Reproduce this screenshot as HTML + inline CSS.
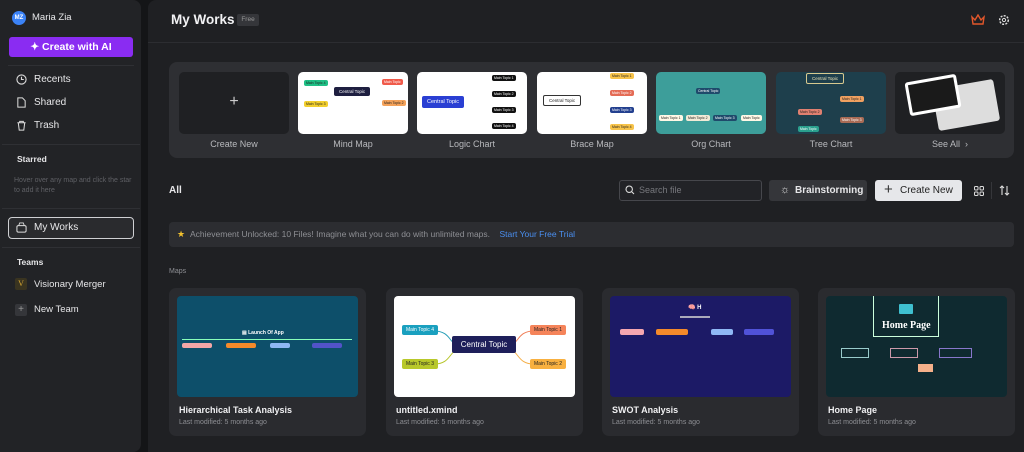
<!DOCTYPE html>
<html><head><meta charset="utf-8"><style>
*{box-sizing:border-box;margin:0;padding:0}
body{width:1024px;height:452px;overflow:hidden;background:#141517;font-family:"Liberation Sans",sans-serif;color:#e6e6e8;position:relative}
.abs{position:absolute;white-space:nowrap}
#side{left:0;top:0;width:141px;height:452px;background:#222326;border-radius:0 8px 8px 0}
#main{left:148px;top:0;width:876px;height:452px;background:#1f2023;border-radius:8px 0 0 0}
.hr{position:absolute;height:1px;background:#2f3034}
.nav{position:absolute;left:16px;font-size:10px;color:#e8e8ea;display:flex;align-items:center;gap:7px;white-space:nowrap}
.tcard{position:absolute;top:72px;width:110px;height:62px;border-radius:5px;overflow:hidden}
.tlabel{position:absolute;top:139px;width:110px;text-align:center;font-size:9px;color:#b8b9bd}
.mcard{position:absolute;top:288px;width:197px;height:148px;background:#2a2b2f;border-radius:7px}
.thumb{position:absolute;left:8px;top:8px;width:181px;height:101px;border-radius:4px;overflow:hidden}
.mt{position:absolute;left:10px;top:117px;font-size:9px;font-weight:bold;color:#f0f0f2}
.ms{position:absolute;left:10px;top:131px;font-size:7px;color:#8d8e93}
.pill{position:absolute;font-size:3.5px;padding:1px 2px;border-radius:2px;color:#222;white-space:nowrap}
</style></head><body>
<div id="side" class="abs">
  <div class="abs" style="left:12px;top:11px;width:14px;height:14px;border-radius:50%;background:#3b82f6;font-size:6px;color:#fff;text-align:center;line-height:14px;font-weight:bold">MZ</div>
  <div class="abs" style="left:32px;top:12px;font-size:9.5px;color:#e8e8ea">Maria Zia</div>
  <div class="abs" style="left:9px;top:37px;width:124px;height:20px;background:#8a2cf2;border-radius:3px;color:#fff;font-size:10.5px;font-weight:bold;text-align:center;line-height:20px">✦ Create with AI</div>
  <div class="hr" style="left:8px;top:65px;width:126px"></div>
  <div class="nav" style="top:74px"><svg width="11" height="11" viewBox="0 0 12 12"><circle cx="6" cy="6" r="5" fill="none" stroke="#ddd" stroke-width="1.2"/><path d="M6 3v3h2.5" stroke="#ddd" fill="none" stroke-width="1.2"/></svg>Recents</div>
  <div class="nav" style="top:97px"><svg width="11" height="11" viewBox="0 0 12 12"><path d="M2 1h5l3 3v7H2z" fill="none" stroke="#ddd" stroke-width="1.1"/></svg>Shared</div>
  <div class="nav" style="top:120px"><svg width="11" height="11" viewBox="0 0 12 12"><path d="M1.5 3h9M4 3V1.5h4V3M2.5 3l1 8h5l1-8" fill="none" stroke="#ddd" stroke-width="1.1"/></svg>Trash</div>
  <div class="hr" style="left:2px;top:144px;width:138px"></div>
  <div class="abs" style="left:17px;top:154px;font-size:8.5px;font-weight:bold">Starred</div>
  <div class="abs" style="left:14px;top:176px;font-size:7px;color:#5f6065;line-height:9.5px;width:125px;white-space:normal">Hover over any map and click the star to add it here</div>
  <div class="hr" style="left:2px;top:208px;width:138px"></div>
  <div class="abs" style="left:8px;top:217px;width:126px;height:22px;border:1.3px solid #cfd0d3;border-radius:4px;background:#2a2b2e"></div>
  <div class="nav" style="top:222px"><svg width="11" height="11" viewBox="0 0 12 12"><rect x="1" y="4" width="10" height="7" rx="1.5" fill="none" stroke="#ddd" stroke-width="1.1"/><path d="M3 4l1-3h4l1 3" fill="none" stroke="#ddd"/></svg>My Works</div>
  <div class="hr" style="left:2px;top:247px;width:138px"></div>
  <div class="abs" style="left:17px;top:257px;font-size:8.5px;font-weight:bold">Teams</div>
  <div class="abs" style="left:15px;top:278px;width:12px;height:12px;background:#3a3420;color:#d6a531;font-size:8px;text-align:center;line-height:12px;font-family:'Liberation Serif',serif;border-radius:2px">V</div>
  <div class="abs" style="left:34px;top:279px;font-size:9.5px">Visionary Merger</div>
  <div class="abs" style="left:15px;top:304px;width:12px;height:12px;background:#35363a;color:#999;font-size:10px;text-align:center;line-height:12px;border-radius:2px">+</div>
  <div class="abs" style="left:34px;top:304px;font-size:9.5px">New Team</div>
</div>
<div id="main" class="abs"></div>
<div class="abs" style="left:171px;top:12px;font-size:13.5px;font-weight:bold;color:#f2f2f4">My Works</div>
<div class="abs" style="left:237px;top:14px;width:22px;height:12px;background:#35363a;border-radius:2px;font-size:6.5px;color:#999;text-align:center;line-height:12px">Free</div>
<svg class="abs" style="left:971px;top:14px" width="14" height="12" viewBox="0 0 14 12"><path d="M1 3l3 3 3-5 3 5 3-3-1 7H2z" fill="none" stroke="#e2572b" stroke-width="1.4"/></svg>
<svg class="abs" style="left:998px;top:14px" width="12" height="12" viewBox="0 0 12 12"><circle cx="6" cy="6" r="4.3" fill="none" stroke="#ddd" stroke-width="1.5" stroke-dasharray="2 1.3"/><circle cx="6" cy="6" r="1.6" fill="none" stroke="#ddd"/></svg>
<div class="hr" style="left:148px;top:42px;width:876px;background:#2c2d31"></div>

<div class="abs" style="left:169px;top:62px;width:845px;height:96px;background:#2e2f33;border-radius:8px"></div>
<div class="tcard" style="left:179px;background:#1f2023;color:#ccc;font-size:16px;text-align:center;line-height:60px">+</div>
<div class="tcard" style="left:298px;background:#fff">
  <div class="pill" style="left:36px;top:15px;background:#1e1f40;color:#fff;font-size:4.5px;padding:2px 5px">Central Topic</div>
  <div class="pill" style="left:6px;top:8px;background:#1fbf85">Main Topic 4</div><div class="pill" style="left:6px;top:29px;background:#f2cf2e">Main Topic 3</div>
  <div class="pill" style="left:84px;top:7px;background:#f05a4a;color:#fff">Main Topic</div><div class="pill" style="left:84px;top:28px;background:#f4a25a">Main Topic 2</div>
</div>
<div class="tcard" style="left:417px;background:#fff">
  <div class="pill" style="left:5px;top:24px;background:#2a3fd3;color:#fff;font-size:5.5px;padding:3px 5px">Central Topic</div>
  <div class="pill" style="left:75px;top:3px;background:#111;color:#fff">Main Topic 1</div><div class="pill" style="left:75px;top:19px;background:#111;color:#fff">Main Topic 2</div>
  <div class="pill" style="left:75px;top:35px;background:#111;color:#fff">Main Topic 3</div><div class="pill" style="left:75px;top:51px;background:#111;color:#fff">Main Topic 4</div>
</div>
<div class="tcard" style="left:537px;background:#fff">
  <div class="pill" style="left:6px;top:23px;border:1px solid #333;font-size:4.5px;padding:2px 5px;background:#fff">Central Topic</div>
  <div class="pill" style="left:73px;top:1px;background:#f7c34a">Main Topic 1</div><div class="pill" style="left:73px;top:18px;background:#e46b55;color:#fff">Main Topic 2</div>
  <div class="pill" style="left:73px;top:35px;background:#23408f;color:#fff">Main Topic 3</div><div class="pill" style="left:73px;top:52px;background:#f7c34a">Main Topic 4</div>
</div>
<div class="tcard" style="left:656px;background:#3d9e9a">
  <div class="pill" style="left:40px;top:16px;background:#1f4a6b;color:#fff">Central Topic</div>
  <div class="pill" style="left:3px;top:43px;background:#fff8e6">Main Topic 1</div><div class="pill" style="left:30px;top:43px;background:#f1ead6">Main Topic 2</div>
  <div class="pill" style="left:57px;top:43px;background:#1f4a6b;color:#fff">Main Topic 3</div><div class="pill" style="left:85px;top:43px;background:#fff8e6">Main Topic</div>
</div>
<div class="tcard" style="left:776px;background:#1e3f4c">
  <div class="pill" style="left:30px;top:1px;border:1px solid #d7c98f;color:#f0e6b8;font-size:4.5px;padding:2px 5px">Central Topic</div>
  <div class="pill" style="left:64px;top:24px;background:#f0a060">Main Topic 1</div><div class="pill" style="left:22px;top:37px;background:#e08070">Main Topic 2</div>
  <div class="pill" style="left:64px;top:45px;background:#a96b55;color:#fff">Main Topic 3</div><div class="pill" style="left:22px;top:54px;background:#2aa08e;color:#fff">Main Topic</div>
</div>
<div class="tcard" style="left:895px;background:#1f2023">
  <div class="abs" style="left:40px;top:12px;width:62px;height:42px;background:#ddd;border-radius:3px;transform:rotate(-10deg)"></div>
  <div class="abs" style="left:12px;top:6px;width:52px;height:34px;background:#1a1a1a;border:3px solid #fff;border-radius:3px;transform:rotate(-10deg)"></div>
</div>
<div class="tlabel" style="left:179px">Create New</div><div class="tlabel" style="left:298px">Mind Map</div>
<div class="tlabel" style="left:417px">Logic Chart</div><div class="tlabel" style="left:537px">Brace Map</div>
<div class="tlabel" style="left:656px">Org Chart</div><div class="tlabel" style="left:776px">Tree Chart</div>
<div class="tlabel" style="left:895px">See All &nbsp;›</div>

<div class="abs" style="left:169px;top:185px;font-size:10px;font-weight:bold">All</div>
<div class="abs" style="left:619px;top:180px;width:143px;height:21px;border:1px solid #46474c;border-radius:3px;background:#222327;font-size:9px;color:#77787d;line-height:19px;padding-left:19px">Search file</div>
<svg class="abs" style="left:625px;top:185px" width="10" height="10" viewBox="0 0 10 10"><circle cx="4.2" cy="4.2" r="3.2" fill="none" stroke="#ddd" stroke-width="1.1"/><path d="M6.6 6.6L9 9" stroke="#ddd" stroke-width="1.1"/></svg>
<div class="abs" style="left:769px;top:180px;width:98px;height:21px;background:#35363a;border-radius:3px;font-size:10px;font-weight:bold;line-height:21px;padding-left:26px">Brainstorming</div>
<div class="abs" style="left:780px;top:184px;font-size:11px;color:#ddd;line-height:12px">☼</div>
<div class="abs" style="left:875px;top:180px;width:87px;height:21px;background:#e6e7ea;border-radius:3px;font-size:10px;color:#222;line-height:21px;padding-left:25px">Create New</div>
<div class="abs" style="left:884px;top:182px;font-size:15px;color:#333;line-height:16px">+</div>
<svg class="abs" style="left:974px;top:186px" width="10" height="10" viewBox="0 0 10 10"><g fill="none" stroke="#ddd"><rect x=".5" y=".5" width="3.5" height="3.5" rx="1"/><rect x="6" y=".5" width="3.5" height="3.5" rx="1"/><rect x=".5" y="6" width="3.5" height="3.5" rx="1"/><rect x="6" y="6" width="3.5" height="3.5" rx="1"/></g></svg>
<div class="abs" style="left:991px;top:182px;width:1px;height:17px;background:#35363a"></div>
<svg class="abs" style="left:999px;top:185px" width="11" height="11" viewBox="0 0 11 11"><path d="M3 10V1M1 3l2-2 2 2M8 1v9M6 8l2 2 2-2" fill="none" stroke="#ddd" stroke-width="1.1"/></svg>

<div class="abs" style="left:169px;top:222px;width:845px;height:25px;background:#2c2d31;border-radius:4px;font-size:8.5px;color:#8e8f94;line-height:25px;padding-left:21px">Achievement Unlocked: 10 Files! Imagine what you can do with unlimited maps. &nbsp;&nbsp;&nbsp;<span style="color:#4a8ff0">Start Your Free Trial</span></div>
<div class="abs" style="left:177px;top:229px;font-size:9px;color:#f2c12e">★</div>
<div class="abs" style="left:169px;top:268px;font-size:7px;color:#8e8f94">Maps</div>

<div class="mcard" style="left:169px"><div class="thumb" style="background:#0d4f6a">
  <div class="abs" style="left:65px;top:34px;font-size:5px;color:#fff;font-weight:bold">▤ Launch Of App</div>
  <div class="abs" style="left:5px;top:43px;width:170px;height:1px;background:#8fb"></div>
  <div class="pill" style="left:5px;top:47px;background:#f5a7a7;width:30px;height:5px"></div>
  <div class="pill" style="left:49px;top:47px;background:#f58a2a;width:30px;height:5px"></div>
  <div class="pill" style="left:93px;top:47px;background:#8fb8f5;width:20px;height:5px"></div>
  <div class="pill" style="left:135px;top:47px;background:#5253c8;width:30px;height:5px"></div>
</div><div class="mt">Hierarchical Task Analysis</div><div class="ms">Last modified: 5 months ago</div></div>
<div class="mcard" style="left:386px"><div class="thumb" style="background:#fff">
  <svg class="abs" style="left:0;top:0" width="181" height="101"><g fill="none" stroke-width="1"><path d="M40 35C55 35 55 45 62 49" stroke="#2a9fb8"/><path d="M40 68C55 68 55 58 62 54" stroke="#b6c52a"/><path d="M140 35C125 35 125 45 118 49" stroke="#f0805a"/><path d="M140 68C125 68 125 58 118 54" stroke="#f5b04a"/></g></svg>
  <div class="abs" style="left:58px;top:40px;width:64px;height:17px;background:#1e1f5a;border-radius:2px;color:#fff;font-size:8px;text-align:center;line-height:17px">Central Topic</div>
  <div class="pill" style="left:8px;top:29px;background:#1aa0bf;color:#fff;font-size:5px;padding:2px 4px">Main Topic 4</div>
  <div class="pill" style="left:8px;top:63px;background:#b8c82a;font-size:5px;padding:2px 4px">Main Topic 3</div>
  <div class="pill" style="left:136px;top:29px;background:#f5845a;font-size:5px;padding:2px 4px">Main Topic 1</div>
  <div class="pill" style="left:136px;top:63px;background:#f8b040;font-size:5px;padding:2px 4px">Main Topic 2</div>
</div><div class="mt">untitled.xmind</div><div class="ms">Last modified: 5 months ago</div></div>
<div class="mcard" style="left:602px"><div class="thumb" style="background:#1c1a66">
  <div class="abs" style="left:78px;top:8px;font-size:6px;color:#fff;font-weight:bold">🧠 H</div>
  <div class="abs" style="left:70px;top:20px;width:30px;height:2px;background:#aab"></div>
  <div class="pill" style="left:10px;top:33px;background:#f5a7b0;width:24px;height:6px"></div>
  <div class="pill" style="left:46px;top:33px;background:#f58a2a;width:32px;height:6px"></div>
  <div class="pill" style="left:101px;top:33px;background:#8fb8f5;width:22px;height:6px"></div>
  <div class="pill" style="left:134px;top:33px;background:#5052d8;width:30px;height:6px"></div>
</div><div class="mt">SWOT Analysis</div><div class="ms">Last modified: 5 months ago</div></div>
<div class="mcard" style="left:818px"><div class="thumb" style="background:#0f2a30">
  <div class="abs" style="left:47px;top:-2px;width:66px;height:43px;border:1px solid #cfd;border-top:none"></div>
  <div class="abs" style="left:73px;top:8px;width:14px;height:10px;background:#3fc0d0;border-radius:1px"></div>
  <div class="abs" style="left:56px;top:24px;font-size:10px;color:#fff;font-family:'Liberation Serif',serif;font-weight:bold">Home Page</div>
  <div class="abs" style="left:15px;top:52px;width:28px;height:10px;border:1px solid #9cc"></div>
  <div class="abs" style="left:64px;top:52px;width:28px;height:10px;border:1px solid #c9a"></div>
  <div class="abs" style="left:113px;top:52px;width:33px;height:10px;border:1px solid #87c"></div>
  <div class="abs" style="left:92px;top:68px;width:15px;height:8px;background:#f5b08a"></div>
</div><div class="mt">Home Page</div><div class="ms">Last modified: 5 months ago</div></div>
</body></html>
